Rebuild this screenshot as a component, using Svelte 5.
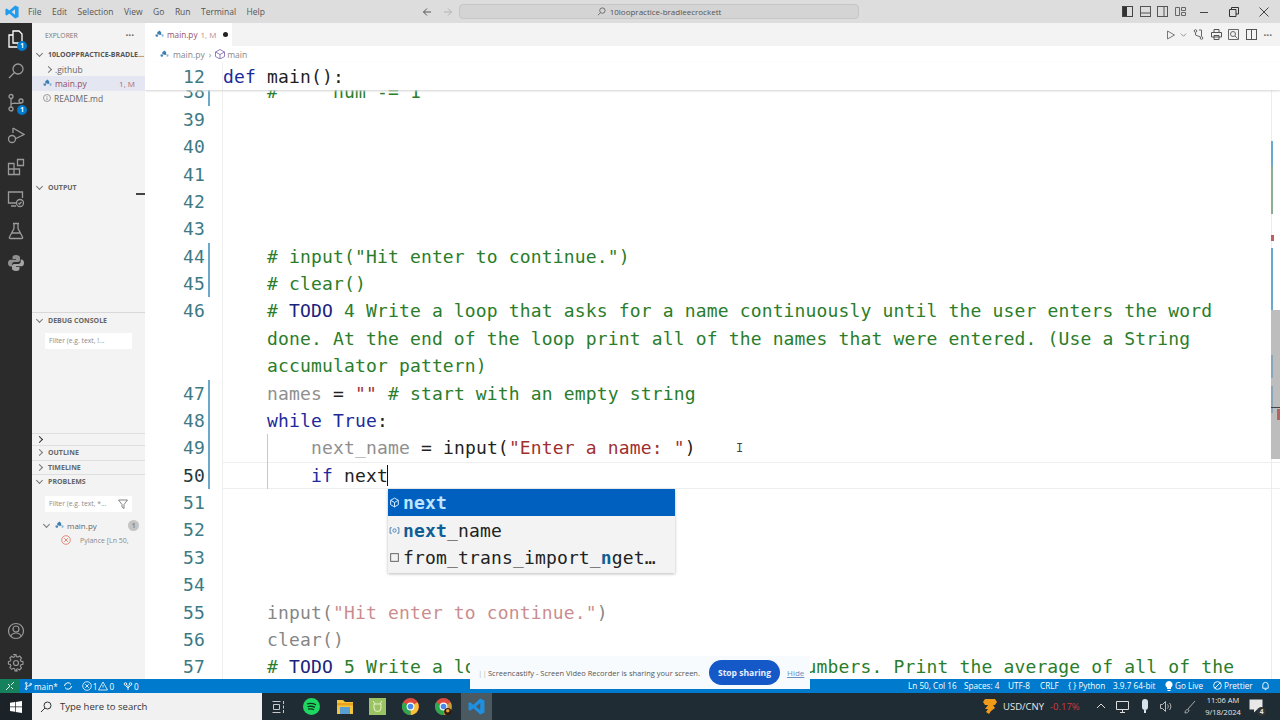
<script>
  const menus = ["File", "Edit", "Selection", "View", "Go", "Run", "Terminal", "Help"];

  const c = "cm", k = "kw", s = "str", t = "", d = "dim", n = "todo";
  const lines = [
    { no: 38, git: true, rows: [[[c, "#     num -= 1"]]] },
    { no: 39, rows: [[]] },
    { no: 40, rows: [[]] },
    { no: 41, rows: [[]] },
    { no: 42, rows: [[]] },
    { no: 43, rows: [[]] },
    { no: 44, git: true, rows: [[[c, '# input("Hit enter to continue.")']]] },
    { no: 45, git: true, rows: [[[c, "# clear()"]]] },
    {
      no: 46,
      rows: [
        [[c, "# "], [n, "TODO"], [c, " 4 Write a loop that asks for a name continuously until the user enters the word"]],
        [[c, "done. At the end of the loop print all of the names that were entered. (Use a String"]],
        [[c, "accumulator pattern)"]]
      ]
    },
    { no: 47, git: true, rows: [[[d, "names"], [t, " = "], [s, '""'], [c, " # start with an empty string"]]] },
    { no: 48, git: true, rows: [[[k, "while"], [t, " "], [k, "True"], [t, ":"]]] },
    { no: 49, git: true, indent: 1, rows: [[[d, "next_name"], [t, " = input("], [s, '"Enter a name: "'], [t, ")"]]] },
    { no: 50, git: true, indent: 1, current: true, rows: [[[k, "if"], [t, " next"]]] },
    { no: 51, rows: [[]] },
    { no: 52, rows: [[]] },
    { no: 53, rows: [[]] },
    { no: 54, rows: [[]] },
    { no: 55, faded: true, rows: [[[t, "input("], [s, '"Hit enter to continue."'], [t, ")"]]] },
    { no: 56, faded: true, rows: [[[t, "clear()"]]] },
    {
      no: 57,
      gap: true,
      rows: [[[c, "# "], [n, "TODO"], [c, " 5 Write a lo"], ["gap", ""], [c, "umbers. Print the average of all of the"]]]
    }
  ];

  const statusRight = [
    ["Ln 50, Col 16", 908],
    ["Spaces: 4", 964],
    ["UTF-8", 1008],
    ["CRLF", 1040],
    ["{ } Python", 1068],
    ["3.9.7 64-bit", 1113],
    ["Go Live", 1175],
    ["Prettier", 1224]
  ];
</script>

{#snippet py(size)}
  <svg class="py" width={size} height={size} viewBox="0 0 16 16">
    <path fill="#3f7fb0" d="M8 1 4 4v3h4v1H3L1 8v3l2 1h2v-2l1-1h4l1-1V4z" />
    <path fill="#5f9cc4" d="M8 15l4-3V9H8V8h5l2 0v3l-2 1h-1l-1 1z" opacity=".8" />
  </svg>
{/snippet}

<div class="screen">
  <header class="titlebar">
    <svg class="logo" width="14" height="14" viewBox="0 0 16 16">
      <path fill="#1f9cf0" d="M11.5 0.5 15.5 2.400V13.600L11.5 15.500 5 9.600 2 12 .5 11.200V4.800L2 4 5 6.400zM11.500 4.800 7.500 8 11.500 11.200z" />
    </svg>
    <nav class="menus">
      {#each menus as m}<span>{m}</span>{/each}
    </nav>
    <div class="arrows">
      <svg width="10" height="10" viewBox="0 0 10 10"><path d="M9 5H1.500M5 1.500 1.500 5 5 8.500" fill="none" stroke="#555" /></svg>
      <svg width="10" height="10" viewBox="0 0 10 10"><path d="M1 5h7.500M5 1.500 8.500 5 5 8.500" fill="none" stroke="#b5b5b5" /></svg>
    </div>
    <div class="command">
      <svg width="9" height="9" viewBox="0 0 10 10"><circle cx="6" cy="4" r="3" fill="none" stroke="#666" /><path d="M4 6.200 1 9.200" stroke="#666" /></svg>
      10loopractice-bradleecrockett
    </div>
    <div class="layout-icons">
      <svg width="11" height="11" viewBox="0 0 11 11"><rect x=".5" y=".5" width="10" height="10" fill="none" stroke="#444" /><rect x="1" y="1" width="4" height="9" fill="#333" /></svg>
      <svg width="11" height="11" viewBox="0 0 11 11"><rect x=".5" y=".5" width="10" height="10" fill="none" stroke="#555" /><path d="M1 7h9" stroke="#555" /></svg>
      <svg width="11" height="11" viewBox="0 0 11 11"><rect x=".5" y=".5" width="10" height="10" fill="none" stroke="#555" /><path d="M7 1v9" stroke="#555" /></svg>
      <svg width="11" height="11" viewBox="0 0 11 11"><path d="M.5 1.500h4v8h-4zM6.500 1.500h4v3h-4zM6.500 6.500h4v3h-4z" fill="none" stroke="#666" /></svg>
    </div>
    <div class="window-btns">
      <svg width="10" height="10" viewBox="0 0 10 10"><path d="M1 5.500h8" stroke="#444" /></svg>
      <svg width="10" height="10" viewBox="0 0 10 10"><path d="M.5 2.500h6.500v7H.5zM2.500 2.500V.5h7v6.500H7" fill="none" stroke="#333" /></svg>
      <svg width="10" height="10" viewBox="0 0 10 10"><path d="M.5.500l9 9M9.500.500l-9 9" stroke="#444" /></svg>
    </div>
  </header>

  <div class="main">
    <aside class="activity">
      <div class="act-top">
        <div class="act">
          <svg width="20" height="20" viewBox="0 0 20 20" fill="none" stroke="#fff" stroke-width="1.300"><path d="M7 2h6l3 3v9H7zM7 6H3v12h9v-4" /></svg>
          <b class="badge">1</b>
        </div>
        <div class="act">
          <svg width="18" height="18" viewBox="0 0 18 18" fill="none" stroke="#9a9a9a" stroke-width="1.300"><circle cx="11" cy="7" r="5" /><path d="M7.500 10.500 2 16" /></svg>
        </div>
        <div class="act">
          <svg width="18" height="20" viewBox="0 0 18 20" fill="none" stroke="#9a9a9a" stroke-width="1.300"><circle cx="4" cy="3.500" r="2" /><circle cx="4" cy="16" r="2" /><circle cx="14" cy="8" r="2" /><path d="M4 5.500V14M4 12c0-3 8-1 10-2" /></svg>
          <b class="badge">1</b>
        </div>
        <div class="act">
          <svg width="18" height="18" viewBox="0 0 18 18" fill="none" stroke="#9a9a9a" stroke-width="1.300"><path d="M6 2l11 6.500L8 13" /><circle cx="5" cy="13" r="3.500" /><path d="M6 2v5" /></svg>
        </div>
        <div class="act">
          <svg width="18" height="18" viewBox="0 0 18 18" fill="none" stroke="#9a9a9a" stroke-width="1.300"><path d="M1.500 5.500h5.500v11H1.500zM1.500 11h11v5.500H7M10.500 1.500h6v6h-6z" /></svg>
        </div>
        <div class="act">
          <svg width="18" height="18" viewBox="0 0 18 18" fill="none" stroke="#9a9a9a" stroke-width="1.300"><path d="M9 13H1.500V2h14v6M4 16h5" /><circle cx="13" cy="13" r="3.500" /><path d="m11.500 13 1 1 2-2" /></svg>
        </div>
        <div class="act">
          <svg width="18" height="18" viewBox="0 0 18 18" fill="none" stroke="#9a9a9a" stroke-width="1.300"><path d="M6 1.500h6M7 1.500v5L2.500 15c-.5 1 0 1.500 1 1.500h11c1 0 1.500-.5 1-1.500L11 6.500v-5M5 11h8" /></svg>
        </div>
        <div class="act">
          <svg width="18" height="18" viewBox="0 0 18 18"><path fill="#8f8f8f" d="M9 1C6 1 5.500 2 5.500 3.500V5H9v.7H3.500C2 5.700 1 7 1 9s1 3.500 2.500 3.500H5v-2c0-1.500 1-2.500 2.500-2.500h3.500c1 0 2-1 2-2V3.500C13 2 11.500 1 9 1z" /><path fill="#a5a5a5" d="M9 17c3 0 3.500-1 3.500-2.500V13H9v-.7h5.500C16 12.300 17 11 17 9s-1-3.500-2.500-3.500H13.700v2c0 1.500-1 2.500-2.500 2.500H7c-1 0-2 1-2 2v2.500C5 16 6.500 17 9 17z" /></svg>
        </div>
      </div>
      <div class="act-bottom">
        <div class="act">
          <svg width="18" height="18" viewBox="0 0 18 18" fill="none" stroke="#9a9a9a" stroke-width="1.200"><circle cx="9" cy="9" r="7.500" /><circle cx="9" cy="7" r="3" /><path d="M3.800 14.200c1-2.500 3-3.200 5.200-3.200s4.200.7 5.200 3.200" /></svg>
        </div>
        <div class="act">
          <svg width="18" height="18" viewBox="0 0 18 18" fill="none" stroke="#9a9a9a" stroke-width="1.200"><circle cx="9" cy="9" r="2.500" /><path d="M7.500 1.500h3l.4 2.200 1.500.7 1.900-1.200 2 2.100-1.200 1.800.6 1.500 2.200.5v2.800l-2.200.5-.6 1.500 1.200 1.800-2 2.100-1.900-1.200-1.500.6-.4 2.200" transform="translate(-1 -1) scale(.95)" /><path d="M7.500 1.500l-.4 2.200-1.500.7-1.900-1.200-2 2.100 1.200 1.800-.6 1.500-2.200.5v2.800l2.200.5.6 1.500-1.200 1.800 2 2.100 1.900-1.200 1.500.6.400 2.200h3" transform="translate(1.300 -.6) scale(.9)" /></svg>
        </div>
      </div>
    </aside>

    <aside class="sidebar">
      <section class="explorer">
        <div class="side-title"><span>EXPLORER</span><span class="dots">···</span></div>
        <div class="tree-head"><i class="chev down"></i>10LOOPPRACTICE-BRADLE...</div>
        <div class="tree-row"><i class="chev right"></i>.github</div>
        <div class="tree-row active mod">{@render py(9)}<span>main.py</span><span class="mark">1, M</span></div>
        <div class="tree-row">
          <svg width="8" height="8" viewBox="0 0 8 8" fill="none" stroke="#777" stroke-width=".7"><circle cx="4" cy="4" r="3.500" /><path d="M4 3.500V6M4 2v.8" /></svg>
          <span>README.md</span>
        </div>
      </section>

      <section class="output">
        <div class="sec-head"><i class="chev down"></i>OUTPUT</div>
        <span class="dash"></span>
      </section>

      <section class="debug">
        <div class="sec-head"><i class="chev down"></i>DEBUG CONSOLE</div>
        <div class="filter">Filter (e.g. text, !...</div>
      </section>

      <div class="sec-head plain solo"><i class="chev right dark"></i></div>
      <div class="sec-head plain"><i class="chev right"></i>OUTLINE</div>
      <div class="sec-head plain"><i class="chev right"></i>TIMELINE</div>
      <section class="problems">
        <div class="sec-head plain"><i class="chev down"></i>PROBLEMS</div>
        <div class="filter wide">
          <span>Filter (e.g. text, *...</span>
          <svg width="10" height="10" viewBox="0 0 10 10" fill="none" stroke="#666" stroke-width=".8"><path d="M.5 1h9L6 5.500V9.500L4 8V5.500z" /></svg>
        </div>
        <div class="prob-file"><i class="chev down"></i>{@render py(9)}<span class="pf">main.py</span><b>1</b></div>
        <div class="prob-msg">
          <svg width="10" height="10" viewBox="0 0 10 10" fill="none" stroke="#e06c5f" stroke-width=".8"><circle cx="5" cy="5" r="4.300" /><path d="m3.200 3.200 3.600 3.600M6.800 3.200 3.200 6.800" /></svg>
          <span>Pylance [Ln 50,</span>
        </div>
      </section>
    </aside>

    <main class="editor">
      <div class="tabs">
        <div class="tab">
          {@render py(9)}
          <span class="tab-name">main.py</span>
          <span class="tab-mark">1, M</span>
          <span class="tab-dot"></span>
        </div>
        <div class="tab-actions">
          <svg width="10" height="10" viewBox="0 0 10 10" fill="none" stroke="#777"><path d="M1.500 1l7 4-7 4z" /></svg>
          <svg class="tiny" width="7" height="7" viewBox="0 0 8 8" fill="none" stroke="#888"><path d="m1 3 3 3 3-3" /></svg>
          <svg width="11" height="11" viewBox="0 0 11 11" fill="none" stroke="#666"><circle cx="2.500" cy="2" r="1.300" /><circle cx="8.500" cy="9" r="1.300" /><path d="M2.500 3.500V6l5 2M6 1h2.500v6" /></svg>
          <svg width="11" height="11" viewBox="0 0 11 11" fill="none" stroke="#555"><path d="M3 3V.5h5V3M.5 3.500h10v4.500h-10zM3 6.500h5v4H3z" /></svg>
          <svg width="11" height="11" viewBox="0 0 11 11" fill="none" stroke="#666"><path d="M.5.500h10v10h-10z" /><circle cx="5" cy="5" r="2.500" /><path d="m7 7 2.500 2.500" /></svg>
          <svg width="11" height="11" viewBox="0 0 11 11" fill="none" stroke="#555"><rect x=".5" y=".5" width="10" height="10" /><path d="M5.500.500v10" /></svg>
          <span class="dots">···</span>
        </div>
      </div>
      <div class="crumbs">
        {@render py(9)}<span>main.py</span><span class="sep">›</span>
        <svg width="10" height="10" viewBox="0 0 10 10" fill="none" stroke="#7a5aa6" stroke-width=".8"><path d="M5 .5 9.500 3v4.500L5 10 .5 7.500V3zM.5 3 5 5.500 9.500 3M5 5.500V10" /></svg>
        <span>main</span>
      </div>

      <div class="sticky">
        <span class="num">12</span>
        <span class="gutter-rest"></span>
        <span class="code"><span class="kw">def</span> main():</span>
      </div>

      <div class="lines">
        {#each lines as line}
          {#each line.rows as row, i}
            <div class="line" class:current={line.current} class:faded={line.faded}>
              <span class="num" class:on={line.current}>{i === 0 ? line.no : ""}</span>
              <span class="gutter-rest" class:git={line.git}></span>
              <span class="code">{#if line.indent}<span class="guide"></span>{/if}{#each row as part}<span class={part[0]}>{part[1]}</span>{/each}{#if line.current}<span class="caret"></span>{/if}</span>
            </div>
          {/each}
        {/each}
      </div>

      <div class="suggest">
        <div class="sug sel">
          <svg width="11" height="11" viewBox="0 0 10 10" fill="none" stroke="#d6ecff" stroke-width=".9"><path d="M5 1 8.500 3v4L5 9 1.500 7V3zM1.500 3 5 5l3.500-2M5 5v4" /></svg>
          <span class="hit">next</span>
        </div>
        <div class="sug">
          <svg width="11" height="11" viewBox="0 0 10 10" fill="none" stroke="#3b78b0" stroke-width=".8"><path d="M2.500 2.500H1v5h1.500M7.500 2.500H9v5H7.500" /><circle cx="5" cy="5" r="1.500" /></svg>
          <span><span class="hit">next</span>_name</span>
        </div>
        <div class="sug">
          <svg width="11" height="11" viewBox="0 0 10 10" fill="none" stroke="#666" stroke-width=".9"><rect x="1.500" y="1.500" width="7" height="7" /></svg>
          <span>from_trans_import_<span class="hit">n</span>get…</span>
        </div>
      </div>

      <div class="ruler">
        <span class="mark blue" style="top:51px;height:25px"></span>
        <span class="mark green" style="top:76px;height:48px"></span>
        <span class="mark red" style="top:145px;height:6px"></span>
        <span class="mark blue" style="top:158px;height:62px"></span>
        <div class="slider"></div>
        <span class="mark blue dim" style="top:265px;height:23px"></span>
        <span class="mark blue dim" style="top:296px;height:27px"></span>
        <span class="tick"></span>
        <span class="err"></span>
      </div>

      <div class="mouse">I</div>
    </main>
  </div>

  <footer class="status">
    <div class="remote">
      <svg width="10" height="10" viewBox="0 0 10 10" fill="none" stroke="#fff" stroke-width=".9"><path d="M1 9 5 5M5 5 3 3M6 4l3-3M6 6l2 2" /></svg>
    </div>
    <div class="st-left">
      <svg width="9" height="10" viewBox="0 0 10 10" fill="none" stroke="#fff"><circle cx="2.500" cy="2" r="1" /><circle cx="2.500" cy="8" r="1" /><circle cx="7.500" cy="3" r="1" /><path d="M2.500 3v4M2.500 6c0-1.500 5-1 5-2" /></svg>
      <span class="gapped">main*</span>
      <svg width="10" height="10" viewBox="0 0 10 10" fill="none" stroke="#fff"><path d="M1.500 5A3.500 3.500 0 0 1 8 3.500M8.500 5A3.500 3.500 0 0 1 2 6.500" /></svg>
      <svg class="after" width="10" height="10" viewBox="0 0 10 10" fill="none" stroke="#fff" stroke-width=".8"><circle cx="5" cy="5" r="4.300" /><path d="m3.200 3.200 3.600 3.600M6.800 3.200 3.200 6.800" /></svg>
      <span>1</span>
      <svg width="10" height="10" viewBox="0 0 10 10" fill="none" stroke="#fff" stroke-width=".8"><path d="M5 1 9.500 9h-9zM5 4v2.500" /></svg>
      <span>0</span>
      <svg class="after" width="10" height="10" viewBox="0 0 10 10" fill="none" stroke="#fff" stroke-width=".9"><circle cx="2.500" cy="3" r="1.300" /><circle cx="7.500" cy="3" r="1.300" /><path d="M5 9V4M2.500 4.500 5 7l2.500-2.500" /></svg>
      <span>0</span>
    </div>
    <div class="st-right">
      {#each statusRight as item}
        <span class="st-item" style="left:{item[1]}px">{item[0]}</span>
      {/each}
      <svg class="st-icon live" width="8" height="10" viewBox="0 0 8 10" fill="#fff"><path d="M4 0a3.500 3.500 0 0 0-2 6.400V8h4V6.400A3.500 3.500 0 0 0 4 0zM2.500 9h3v1h-3z" /></svg>
      <svg class="st-icon pret" width="9" height="9" viewBox="0 0 10 10" fill="none" stroke="#fff"><circle cx="5" cy="5" r="4.300" /><path d="M2 8 8 2" /></svg>
      <svg class="bell" width="9" height="10" viewBox="0 0 10 10" fill="none" stroke="#fff"><path d="M2 7.500V4a3 3 0 0 1 6 0v3.500zM4 9h2" /></svg>
    </div>
  </footer>

  <div class="taskbar">
    <div class="start">
      <svg width="12" height="12" viewBox="0 0 12 12" fill="#fff"><path d="M0 1.700 5 1v4.500H0zM5.700.900 12 0v5.500H5.700zM0 6.200h5v4.600l-5-.7zM5.700 6.200H12V12l-6.300-.9z" /></svg>
    </div>
    <div class="search">
      <svg width="12" height="12" viewBox="0 0 12 12" fill="none" stroke="#333"><circle cx="7.500" cy="4.500" r="3.500" /><path d="M5 7 1 11" /></svg>
      <span>Type here to search</span>
    </div>
    <div class="task">
      <svg width="13" height="12" viewBox="0 0 13 12" fill="none" stroke="#c8c8c8"><path d="M.5.500h8M.5 11.500h8M1.500 3.500h6v5h-6zM11.500 0v3M11.500 4.500v3M11.500 9v3" /></svg>
    </div>
    <div class="task">
      <svg width="17" height="17" viewBox="0 0 17 17"><circle cx="8.500" cy="8.500" r="8.500" fill="#1ed760" /><path d="M4 6c3-1 6-.7 9 .8M4.500 8.700c2.500-.8 5-.5 7.500.7M5 11.200c2-.6 4.200-.4 6 .6" fill="none" stroke="#0c3a1e" stroke-width="1.300" /></svg>
    </div>
    <div class="task">
      <svg width="16" height="14" viewBox="0 0 16 14"><path fill="#f4c63d" d="M0 0h6l2 2h8v12H0z" /><rect y="3" width="16" height="2.500" fill="#e8a21f" /><rect x="3" y="7" width="10" height="7" fill="#5a9fd4" /></svg>
    </div>
    <div class="task">
      <svg width="17" height="17" viewBox="0 0 17 17"><rect width="17" height="17" fill="#9ac364" /><path d="M5 6h7v4a3.500 3.500 0 0 1-7 0zM4 3l2 3M13 3l-2 3" fill="none" stroke="#e6f2c8" /></svg>
    </div>
    <div class="task">
      <svg width="17" height="17" viewBox="0 0 48 48"><circle cx="24" cy="24" r="24" fill="#dd4b3e" /><path d="M24 24 44 12a24 24 0 0 1-20 36z" fill="#f7c23b" /><path d="M24 24 24 48A24 24 0 0 1 3 12z" fill="#2ea84f" /><circle cx="24" cy="24" r="11" fill="#fff" /><circle cx="24" cy="24" r="8" fill="#4a8ae8" /></svg>
    </div>
    <div class="task">
      <svg width="17" height="17" viewBox="0 0 48 48"><circle cx="24" cy="24" r="24" fill="#dd4b3e" /><path d="M24 24 44 12a24 24 0 0 1-20 36z" fill="#c99a3b" /><path d="M24 24 24 48A24 24 0 0 1 3 12z" fill="#2ea84f" /><circle cx="24" cy="24" r="11" fill="#fff" /><circle cx="24" cy="24" r="8" fill="#4a8ae8" /><circle cx="36" cy="38" r="10" fill="#2b1a10" /><circle cx="36" cy="36" r="5" fill="#e8a030" /></svg>
    </div>
    <div class="task vs">
      <svg width="17" height="17" viewBox="0 0 16 16"><path fill="#1f8fe0" d="M11.500 0.500 15.500 2.400V13.600L11.500 15.500 5 9.600 2 12 .5 11.200V4.800L2 4 5 6.400zM11.500 4.800 7.500 8 11.500 11.200z" /></svg>
    </div>
    <div class="tray">
      <svg class="coin" width="14" height="16" viewBox="0 0 14 16"><path fill="#f09a1a" d="M2 1h10l2 3-2 3h-2l2 3-4 3-2 3-3-2 2-3H2l3-4H2L0 4z" /></svg>
      <span class="pair">USD/CNY</span>
      <span class="pct">-0.17%</span>
      <svg class="t-caret" width="10" height="6" viewBox="0 0 10 6" fill="none" stroke="#ddd"><path d="m1 5 4-4 4 4" /></svg>
      <svg class="t-mon" width="13" height="12" viewBox="0 0 13 12" fill="none" stroke="#ddd"><path d="M.5.500h12v8h-12zM6.500 8.500v3M4 11.500h5" /></svg>
      <svg class="t-mic" width="8" height="14" viewBox="0 0 8 14"><rect x="1" width="6" height="11" rx="3" fill="#d8e2ee" /><rect x="3" y="11" width="2" height="3" fill="#d8e2ee" /></svg>
      <svg class="t-vol" width="12" height="11" viewBox="0 0 12 11" fill="none" stroke="#bbb"><path d="M.5 3.500h2l3-3v10l-3-3h-2zM7.500 3.500c1 1 1 3 0 4M9.500 2c1.800 2 1.800 5 0 7" /></svg>
      <svg class="t-pen" width="12" height="14" viewBox="0 0 12 14" fill="none" stroke="#aaa"><path d="M11 1 4 9M1 13c0-3 2-4 4-3 0 2-2 3-4 3z" /></svg>
      <div class="clock"><span>11:06 AM</span><span>9/18/2024</span></div>
      <div class="notif">
        <svg width="14" height="14" viewBox="0 0 14 14"><path d="M.5.500h13v10H8l-3 3v-3H.5z" fill="#e8e8e8" /></svg>
        <b>4</b>
      </div>
    </div>
  </div>

  <div class="castify">
    <span class="bars">||</span>
    <span class="cast-text">Screencastify - Screen Video Recorder is sharing your screen.</span>
    <button class="stop">Stop sharing</button>
    <span class="hide">Hide</span>
  </div>
</div>

<style>
  :global(body) {
    margin: 0;
    background: #fff;
    overflow: hidden;
  }
  .screen {
    position: relative;
    width: 1280px;
    height: 720px;
    display: flex;
    flex-direction: column;
    overflow: hidden;
    font-family: "Open Sans", "Noto Sans", sans-serif;
  }

  /* title bar */
  .titlebar {
    height: 23px;
    flex: none;
    background: #dddddd;
    display: flex;
    align-items: center;
    position: relative;
    font-size: 8.5px;
    color: #555;
  }
  .logo {
    margin-left: 5px;
  }
  .menus {
    margin-left: 9px;
    display: flex;
    gap: 10.5px;
  }
  .arrows {
    position: absolute;
    left: 422px;
    display: flex;
    gap: 11px;
  }
  .command {
    position: absolute;
    left: 459px;
    top: 4px;
    width: 400px;
    height: 15px;
    box-sizing: border-box;
    border: 1px solid #c6c6c6;
    border-radius: 4px;
    background: #d4d4d4;
    display: flex;
    align-items: center;
    justify-content: center;
    gap: 4px;
    font-size: 8px;
    color: #555;
  }
  .layout-icons {
    position: absolute;
    left: 1122px;
    display: flex;
    gap: 6.700px;
  }
  .window-btns {
    position: absolute;
    left: 1199px;
    display: flex;
    gap: 20px;
  }

  .main {
    flex: 1;
    min-height: 0;
    display: flex;
    position: relative;
  }

  /* activity bar */
  .activity {
    width: 32px;
    flex: none;
    background: #2b2b2b;
    display: flex;
    flex-direction: column;
    justify-content: space-between;
  }
  .act-top,
  .act-bottom {
    display: flex;
    flex-direction: column;
  }
  .act {
    height: 32px;
    display: flex;
    align-items: center;
    justify-content: center;
    position: relative;
  }
  .badge {
    position: absolute;
    left: 17px;
    top: 18px;
    width: 10px;
    height: 10px;
    border-radius: 50%;
    background: #007acc;
    color: #fff;
    font-size: 6.500px;
    line-height: 10px;
    text-align: center;
  }

  /* side bar */
  .sidebar {
    width: 113px;
    flex: none;
    background: #f3f3f3;
    display: flex;
    flex-direction: column;
    font-size: 8px;
    color: #666;
  }
  .explorer {
    height: 157px;
    flex: none;
  }
  .side-title {
    height: 24px;
    display: flex;
    align-items: center;
    justify-content: space-between;
    padding: 0 11px 0 13px;
    font-size: 6.800px;
    color: #777;
  }
  .dots {
    font-size: 10px;
    font-weight: 700;
    color: #666;
  }
  .tree-head {
    height: 14.700px;
    display: flex;
    align-items: center;
    font-size: 7px;
    font-weight: 700;
    color: #555;
    white-space: nowrap;
    overflow: hidden;
  }
  .tree-row {
    height: 14.700px;
    display: flex;
    align-items: center;
    gap: 3px;
    padding-left: 11px;
    font-size: 8.500px;
    color: #666;
  }
  .tree-row .chev {
    margin: 0 1px 0 3px;
  }
  .tree-row.active {
    background: #e4e6f1;
  }
  .mod {
    color: #95505f;
  }
  .tree-row .mark {
    margin-left: auto;
    margin-right: 10px;
    font-size: 8px;
    color: #b5676f;
  }
  .chev {
    display: inline-block;
    width: 4px;
    height: 4px;
    flex: none;
    margin: 0 6px 0 5px;
    border-right: 1px solid #777;
    border-bottom: 1px solid #777;
  }
  .chev.down {
    transform: translateY(-1px) rotate(45deg);
  }
  .chev.right {
    transform: rotate(-45deg);
  }
  .chev.dark {
    border-color: #333;
  }
  .output {
    height: 132px;
    flex: none;
    box-sizing: border-box;
    position: relative;
  }
  .dash {
    position: absolute;
    right: 0;
    top: 13px;
    width: 9px;
    height: 1.500px;
    background: #444;
  }
  .debug {
    height: 121px;
    flex: none;
    box-sizing: border-box;
    border-top: 1px solid #d8d8d8;
  }
  .sec-head {
    height: 14.600px;
    display: flex;
    align-items: center;
    font-size: 7px;
    font-weight: 700;
    color: #666;
    white-space: nowrap;
  }
  .sec-head.plain {
    border-top: 1px solid #dedede;
    box-sizing: border-box;
  }
  .sec-head.solo {
    height: 12px;
  }
  .filter {
    margin: 0 13px;
    height: 16px;
    padding-left: 4px;
    background: #fff;
    display: flex;
    align-items: center;
    font-size: 6.800px;
    color: #8a8a8a;
  }
  .debug .filter {
    margin-top: 5px;
  }
  .filter.wide {
    margin-top: 7px;
    justify-content: space-between;
    padding-right: 4px;
  }
  .prob-file {
    display: flex;
    align-items: center;
    height: 15px;
    margin-top: 6px;
    padding-left: 7px;
    font-size: 8px;
  }
  .pf {
    margin-left: 3px;
  }
  .prob-file b {
    margin-left: auto;
    margin-right: 6px;
    width: 11px;
    height: 11px;
    border-radius: 50%;
    background: #c4c4c4;
    color: #888;
    text-align: center;
    line-height: 11px;
    font-size: 6.500px;
  }
  .prob-msg {
    display: flex;
    align-items: center;
    gap: 9px;
    height: 15px;
    padding-left: 29px;
    font-size: 7px;
    color: #8a8a8a;
    white-space: nowrap;
    overflow: hidden;
  }

  /* editor */
  .editor {
    flex: 1;
    min-width: 0;
    background: #fff;
    display: flex;
    flex-direction: column;
    position: relative;
    overflow: hidden;
  }
  .tabs {
    height: 23px;
    flex: none;
    background: #f3f3f3;
    display: flex;
    justify-content: space-between;
  }
  .tab {
    width: 87px;
    background: #fff;
    display: flex;
    align-items: center;
    box-sizing: border-box;
    padding-left: 10px;
    font-size: 8.200px;
    color: #95505f;
    white-space: nowrap;
  }
  .tab-name {
    margin-left: 1px;
  }
  .tab-mark {
    margin-left: 3px;
    font-size: 8px;
    color: #c08a8a;
  }
  .tab-dot {
    margin-left: 7px;
    width: 5px;
    height: 5px;
    border-radius: 50%;
    background: #222;
  }
  .tab-actions {
    display: flex;
    align-items: center;
    gap: 6.500px;
    padding-right: 8px;
  }
  .tiny {
    margin-left: -3px;
  }
  .crumbs {
    height: 16px;
    flex: none;
    display: flex;
    align-items: center;
    gap: 2px;
    padding-left: 15px;
    font-size: 8.500px;
    color: #888;
  }
  .sep {
    margin: 0 2px;
  }
  .sticky {
    height: 28px;
    flex: none;
    display: flex;
    align-items: center;
    position: relative;
    z-index: 2;
    background: #fff;
    box-shadow: 0 1px 2px #d4d4d4;
    font-family: "DejaVu Sans Mono", "Liberation Mono", monospace;
    font-size: 18px;
    letter-spacing: 0.155px;
    white-space: pre;
    color: #1f1f1f;
  }
  .lines {
    margin-top: -11.600px;
    font-family: "DejaVu Sans Mono", "Liberation Mono", monospace;
    font-size: 18px;
    letter-spacing: 0.155px;
    color: #222;
    white-space: pre;
  }
  .line {
    height: 27.380px;
    line-height: 27.380px;
    display: flex;
    box-sizing: border-box;
  }
  .num {
    width: 60px;
    flex: none;
    text-align: right;
    color: #3d7a85;
  }
  .num.on {
    color: #1e3a3f;
  }
  .gutter-rest {
    width: 18px;
    flex: none;
    align-self: stretch;
    position: relative;
    box-sizing: border-box;
    border-right: 1px solid #f0f0f0;
  }
  .git::before {
    content: "";
    position: absolute;
    left: 3px;
    top: 0;
    bottom: 0;
    width: 2px;
    background: #6aa9c9;
  }
  .code {
    flex: 1;
    display: block;
    position: relative;
  }
  .lines .code {
    padding-left: 44px;
  }
  .current .code {
    box-shadow: inset 0 1px #eeeeee, inset 0 -1px #eeeeee;
  }
  .guide {
    display: inline-block;
    width: 44px;
    height: 27.380px;
    box-sizing: border-box;
    vertical-align: top;
    border-left: 1px solid #c8c8c8;
  }
  .caret {
    display: inline-block;
    width: 1.500px;
    height: 21px;
    vertical-align: -4px;
    margin-left: -1px;
    background: #111;
  }
  .faded .code {
    opacity: 0.55;
  }
  .cm {
    color: #2a7d2a;
  }
  .kw {
    color: #1c2a9c;
  }
  .todo {
    color: #1a237e;
  }
  .str {
    color: #a03030;
  }
  .dim {
    color: #8f8f8f;
  }
  .gap {
    display: inline-block;
    width: 329.700px;
  }

  /* suggestions */
  .suggest {
    position: absolute;
    left: 243px;
    top: 466px;
    width: 287px;
    height: 84px;
    background: #f3f3f3;
    box-shadow: 0 1px 3px #bbb;
    z-index: 3;
    font-family: "DejaVu Sans Mono", "Liberation Mono", monospace;
    font-size: 18px;
    letter-spacing: 0.155px;
    color: #222;
    white-space: nowrap;
  }
  .sug {
    height: 27.400px;
    display: flex;
    align-items: center;
    gap: 3px;
  }
  .sug svg {
    margin-left: 1px;
    flex: none;
  }
  .sug .hit {
    font-weight: 700;
    color: #0f5f96;
  }
  .sug.sel {
    background: #0060c0;
  }
  .sug.sel .hit {
    color: #bfe4ff;
  }

  /* overview ruler */
  .ruler {
    position: absolute;
    right: 0;
    top: 67px;
    bottom: 0;
    width: 9px;
    box-shadow: inset 1px 0 #ececec;
  }
  .slider {
    position: absolute;
    left: 0;
    right: 0;
    top: 220px;
    height: 149px;
    background: #bdbdbd;
  }
  .ruler .mark {
    position: absolute;
    left: 0;
    width: 2px;
    z-index: 1;
  }
  .mark.blue {
    background: #6aa9d0;
  }
  .mark.green {
    background: #8cae92;
  }
  .ruler .mark.red {
    background: #c25e5e;
    width: 3px;
  }
  .mark.dim {
    background: #8aa5b8;
  }
  .tick {
    position: absolute;
    left: 0;
    right: 0;
    top: 317px;
    height: 1px;
    background: #444;
    z-index: 1;
  }
  .err {
    position: absolute;
    right: 0;
    top: 319px;
    width: 3px;
    height: 11px;
    background: #b5635f;
    z-index: 1;
  }
  .mouse {
    position: absolute;
    left: 591px;
    top: 419px;
    font-family: "Liberation Mono", monospace;
    font-size: 12px;
    color: #444;
  }

  /* status bar */
  .status {
    height: 14px;
    flex: none;
    background: #007acc;
    color: #fff;
    font-size: 8.200px;
    display: flex;
    align-items: center;
    position: relative;
  }
  .remote {
    width: 20px;
    height: 100%;
    background: #16825d;
    display: flex;
    align-items: center;
    justify-content: center;
  }
  .st-left {
    margin-left: 4px;
    display: flex;
    align-items: center;
    gap: 1px;
  }
  .gapped {
    margin-right: 4px;
  }
  .after {
    margin-left: 8px;
  }
  .st-right {
    flex: 1;
  }
  .st-item {
    position: absolute;
    top: 1px;
    white-space: pre;
  }
  .st-icon {
    position: absolute;
    top: 2px;
  }
  .live {
    left: 1165px;
  }
  .pret {
    left: 1213px;
  }
  .bell {
    position: absolute;
    left: 1261px;
    top: 2px;
  }

  /* task bar */
  .taskbar {
    height: 27px;
    flex: none;
    background: #1f2c33;
    display: flex;
    align-items: stretch;
    position: relative;
  }
  .start {
    width: 32px;
    display: flex;
    align-items: center;
    justify-content: center;
    background: #1b2328;
  }
  .search {
    width: 230px;
    box-sizing: border-box;
    background: #f1f1f1;
    display: flex;
    align-items: center;
    gap: 8px;
    padding-left: 8px;
    font-size: 9.500px;
    color: #333;
  }
  .task {
    width: 33px;
    display: flex;
    align-items: center;
    justify-content: center;
  }
  .vs {
    background: #4a5a60;
    width: 31px;
    margin-left: 1px;
  }
  .tray {
    flex: 1;
    position: relative;
    color: #e8e8e8;
    font-size: 9.500px;
  }
  .tray > * {
    position: absolute;
  }
  .coin {
    left: 491px;
    top: 5px;
  }
  .pair {
    left: 511px;
    top: 7px;
  }
  .pct {
    left: 558px;
    top: 7px;
    color: #d0393f;
  }
  .t-caret {
    left: 604px;
    top: 10px;
  }
  .t-mon {
    left: 624px;
    top: 8px;
  }
  .t-mic {
    left: 649px;
    top: 6px;
  }
  .t-vol {
    left: 668px;
    top: 8px;
  }
  .t-pen {
    left: 692px;
    top: 7px;
  }
  .clock {
    left: 714px;
    top: 1px;
    width: 34px;
    display: flex;
    flex-direction: column;
    align-items: center;
    font-size: 7.500px;
    line-height: 12px;
    white-space: nowrap;
  }
  .notif {
    left: 757px;
    top: 6px;
    width: 16px;
    height: 16px;
  }
  .notif b {
    position: absolute;
    left: 8px;
    top: 8px;
    width: 9px;
    height: 9px;
    border-radius: 50%;
    background: #333;
    font-size: 6.500px;
    line-height: 9px;
    text-align: center;
  }

  /* screencastify share bar */
  .castify {
    position: absolute;
    left: 470px;
    top: 656px;
    width: 340px;
    height: 33px;
    box-sizing: border-box;
    background: #f8fbfd;
    display: flex;
    align-items: center;
    padding-left: 8px;
    z-index: 5;
    font-size: 8px;
    color: #555;
  }
  .bars {
    color: #bbb;
    width: 10px;
    font-size: 8px;
  }
  .cast-text {
    width: 214px;
    white-space: nowrap;
    font-size: 7.500px;
    margin-right: 7px;
  }
  .stop {
    width: 71px;
    height: 25px;
    padding: 0;
    border: 0;
    border-radius: 13px;
    background: #1558c7;
    color: #e8f0ff;
    font-family: inherit;
    font-size: 8.500px;
    font-weight: 700;
  }
  .hide {
    margin-left: 7px;
    color: #6a8fc0;
    text-decoration: underline;
  }
  .py {
    flex: none;
  }
  .tab .py,
  .crumbs .py {
    margin-right: 2px;
  }
</style>
